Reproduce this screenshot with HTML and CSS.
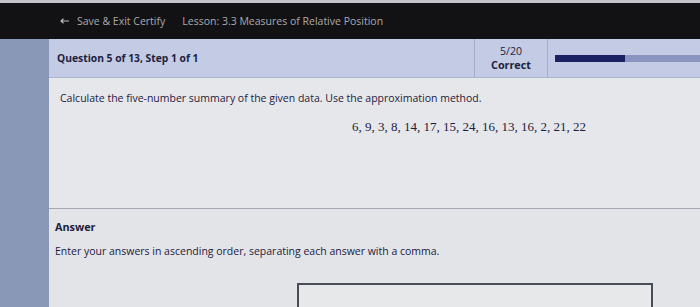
FILE: index.html
```html
<!DOCTYPE html>
<html lang="en">
<head>
    <meta charset="UTF-8">
    <title>Question 5 of 13</title>
    <link rel="stylesheet" href="styles.css">
</head>
<body>
    <div class="page">
        <div class="edge"></div>

        <!-- Top navigation -->
        <div class="topbar">
            <a class="exit-link" href="#">
                <svg class="arrow" width="9" height="6" viewBox="0 0 9 6">
                    <path d="M9 3H1.5M3.5 0.8L1 3l2.5 2.2" fill="none" stroke="#b9b9bd" stroke-width="1.2"/>
                </svg>
                Save &amp; Exit Certify
            </a>
            <span class="lesson">Lesson: 3.3 Measures of Relative Position</span>
        </div>

        <div class="main">
            <div class="sidebar"></div>

            <div class="content">
                <!-- Question header -->
                <div class="qbar">
                    <div class="qtitle">Question 5 of 13, Step 1 of 1</div>
                    <div class="score">
                        <div class="score-num">5/20</div>
                        <div class="score-label">Correct</div>
                    </div>
                    <div class="progress">
                        <div class="progress-track">
                            <div class="progress-fill" style="width: 48%"></div>
                        </div>
                    </div>
                </div>

                <!-- Question body -->
                <div class="qbody">
                    <p class="prompt">Calculate the five-number summary of the given data. Use the approximation method.</p>
                    <p class="data">6, 9, 3, 8, 14, 17, 15, 24, 16, 13, 16, 2, 21, 22</p>
                </div>

                <!-- Answer -->
                <div class="answer">
                    <h3>Answer</h3>
                    <p class="hint">Enter your answers in ascending order, separating each answer with a comma.</p>
                    <div class="input-row">
                        <input type="text" class="answer-input">
                    </div>
                </div>
            </div>
        </div>
    </div>
</body>
</html>
```

FILE: styles.css
```css
body {
    margin: 0;
    font-family: "Open Sans", "DejaVu Sans", sans-serif;
    background-color: #e4e5e8;
    color: #1d2140;
}
.page {
    width: 700px;
    height: 307px;
    overflow: hidden;
    display: flex;
    flex-direction: column;
}
.edge {
    height: 3px;
    flex-shrink: 0;
    background: #c2c4c9;
}
.topbar {
    height: 36px;
    flex-shrink: 0;
    background: #121215;
    display: flex;
    align-items: center;
    padding-left: 60px;
    font-size: 10.5px;
    color: #a9a9ad;
}
.exit-link {
    color: #a9a9ad;
    text-decoration: none;
    display: flex;
    align-items: center;
}
.arrow {
    margin-right: 8px;
}
.lesson {
    margin-left: 17px;
}
.main {
    flex: 1;
    min-height: 0;
    display: flex;
}
.sidebar {
    width: 49px;
    background: #8a98b8;
}
.content {
    flex: 1;
    display: flex;
    flex-direction: column;
}
.qbar {
    height: 38px;
    flex-shrink: 0;
    background: #c3cce4;
    display: flex;
    border-bottom: 1px solid #aeb6cc;
}
.qtitle {
    width: 417px;
    padding-left: 8px;
    display: flex;
    align-items: center;
    font-weight: bold;
    font-size: 10.3px;
}
.score {
    width: 72px;
    border-left: 1px solid #a6afc8;
    border-right: 1px solid #a6afc8;
    display: flex;
    flex-direction: column;
    justify-content: center;
    align-items: center;
    font-size: 10.5px;
    line-height: 13px;
}
.score-label {
    font-weight: bold;
    font-size: 10.8px;
}
.progress {
    flex: 1;
    padding-left: 7px;
    display: flex;
    align-items: center;
}
.progress-track {
    width: 100%;
    height: 7px;
    background: #8b94bf;
}
.progress-fill {
    height: 100%;
    background: #1b2163;
}
.qbody {
    height: 130px;
    flex-shrink: 0;
    border-bottom: 1px solid #a3a8b3;
    background: #e6e7ea;
}
.prompt {
    margin: 13px 0 0 11px;
    font-size: 10.5px;
    line-height: 14px;
}
.data {
    margin: 14px 0 0 303px;
    font-family: "Liberation Serif", "Times New Roman", serif;
    font-size: 13px;
    line-height: 16px;
}
.answer {
    flex: 1;
    padding-left: 6px;
    background: #e3e4e7;
}
.answer h3 {
    margin: 11px 0 0;
    font-size: 10.8px;
    line-height: 14px;
}
.hint {
    margin: 10px 0 0;
    font-size: 10.5px;
    line-height: 14px;
}
.input-row {
    padding: 25px 0 0 242px;
}
.answer-input {
    width: 356px;
    height: 40px;
    border: 2px solid #474c58;
    background: #e7e8ea;
    box-sizing: border-box;
}
```
